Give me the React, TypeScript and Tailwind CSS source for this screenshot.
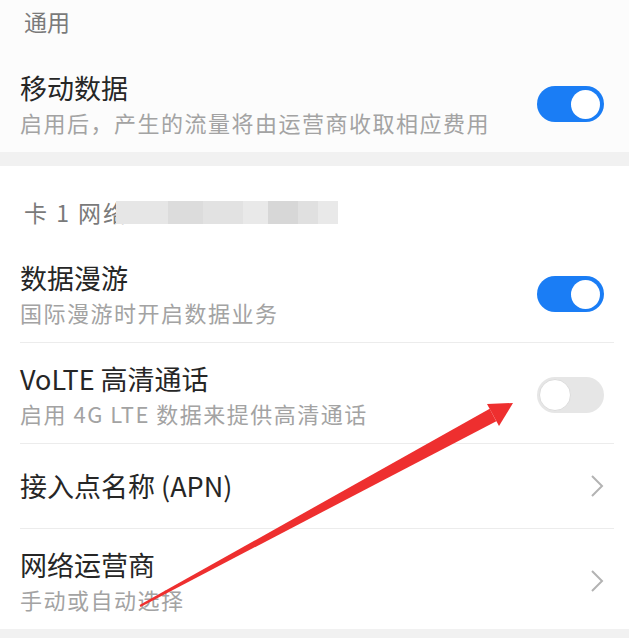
import React from 'react'

const font = { fontFamily: '"Noto Sans CJK SC", "Noto Sans", sans-serif' }

function Toggle({ on }: { on: boolean }) {
  if (on) {
    return (
      <div className="flex h-[36px] w-[67px] shrink-0 items-center justify-end rounded-full bg-[#1a7df5] pr-[4px]">
        <div className="h-[29px] w-[29px] rounded-full bg-white" />
      </div>
    )
  }
  return (
    <div className="flex h-[36px] w-[67px] shrink-0 items-center rounded-full bg-[#e6e6e6] pl-[2px]">
      <div className="h-[32px] w-[32px] rounded-full border border-[#dcdcdc] bg-white" />
    </div>
  )
}

function Chevron() {
  return (
    <svg width="14" height="24" viewBox="0 0 14 24" className="shrink-0">
      <path d="M2 2 L12 12 L2 22" fill="none" stroke="#b3b3b3" strokeWidth="2" />
    </svg>
  )
}

function Row({
  title,
  sub,
  right,
  divider = true,
}: {
  title: string
  sub?: string
  right: React.ReactNode
  divider?: boolean
}) {
  return (
    <div className="pl-[20px]">
      <div
        className={`flex items-center justify-between pr-[25px] ${sub ? 'pt-[20px] pb-[16px]' : 'py-[26px]'} ${divider ? 'border-b border-[#ececec] mr-[15px] !pr-[10px]' : ''}`}
      >
        <div className="flex flex-col gap-[4px]">
          <div className="text-[27px] leading-[32px] text-[#262626]">{title}</div>
          {sub && <div className="text-[22px] leading-[28px] tracking-[1.5px] text-[#a3a3a3]">{sub}</div>}
        </div>
        {right}
      </div>
    </div>
  )
}

export default function App() {
  return (
    <div className="relative h-[638px] w-[629px] overflow-hidden bg-white" style={font}>
      <div className="bg-[#fcfcfc]">
        <div className="pl-[24px] pt-[7px] pb-[17px] text-[23px] leading-[28px] text-[#7a7a7a]">通用</div>
        <Row title="移动数据" sub="启用后，产生的流量将由运营商收取相应费用" right={<Toggle on />} divider={false} />
      </div>
      <div className="h-[14px] bg-[#f1f1f1]" />
      <div className="bg-white">
        <div className="flex items-center pl-[24px] pt-[32px] pb-[16px] text-[23px] leading-[28px] text-[#7a7a7a]">
          <span className="tracking-[2px]">卡 1 网络</span>
          <div className="ml-[-12px] flex h-[23px]">
            <div className="w-[52px] bg-[#e6e6e6]" />
            <div className="w-[35px] bg-[#dcdcdc]" />
            <div className="w-[40px] bg-[#e2e2e2]" />
            <div className="w-[25px] bg-[#e9e9e9]" />
            <div className="w-[30px] bg-[#d7d7d7]" />
            <div className="w-[20px] bg-[#e0e0e0]" />
            <div className="w-[20px] bg-[#e9e9e9]" />
          </div>
        </div>
        <Row title="数据漫游" sub="国际漫游时开启数据业务" right={<Toggle on />} />
        <Row title="VoLTE 高清通话" sub="启用 4G LTE 数据来提供高清通话" right={<Toggle on={false} />} />
        <Row title="接入点名称 (APN)" right={<Chevron />} />
        <Row title="网络运营商" sub="手动或自动选择" right={<Chevron />} divider={false} />
      </div>
      <div className="h-[10px] bg-[#f1f1f1]" />

      <svg className="pointer-events-none absolute inset-0" width="629" height="638" viewBox="0 0 629 638">
        <polygon points="140.5,606.9 139.5,605.1 489.7,408.8 496.3,421.2" fill="#ee2f2f" />
        <polygon points="487,404 513,403 499,426" fill="#ee2f2f" />
      </svg>
    </div>
  )
}
